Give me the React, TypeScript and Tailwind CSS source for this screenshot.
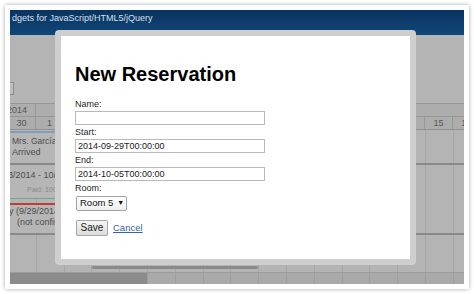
const days = ["30", "1", "2", "3", "4", "5", "6", "7", "8", "9", "10", "11", "12", "13", "14", "15", "16"];

function Field({ label, value }: { label: string; value: string }) {
  return (
    <div>
      <div className="text-[9px] leading-[13px] text-[#262626]">{label}</div>
      <input
        readOnly
        defaultValue={value}
        className="mb-[1px] block h-[14px] w-[190px] border border-[#b9b9b9] bg-white px-[2px] text-[9px] text-[#1a1a1a] outline-none"
      />
    </div>
  );
}

export default function App() {
  return (
    <div className="h-[294px] w-[474px] bg-white p-[5px] font-['Liberation_Sans',Arial,sans-serif]">
      <div className="h-[284px] w-[464px] bg-white p-[5px] shadow-[0_0_4px_rgba(0,0,0,0.35)]">
        <div className="relative flex h-[274px] w-[454px] flex-col overflow-hidden bg-[#b4b4b4]">
          {/* page header */}
          <div className="h-[25px] shrink-0 bg-gradient-to-b from-[#0a3360] to-[#104778] pl-[2px] pt-[2px] text-[9px] leading-[12px] whitespace-nowrap text-[#d6e0eb]">
            dgets for JavaScript/HTML5/jQuery
          </div>

          {/* toolbar area */}
          <div className="h-[68px] shrink-0 pt-[47px]">
            <div className="ml-[-10px] h-[13px] w-[14px] border border-[#8e8e8e] bg-[#bdbdbd]" />
          </div>

          {/* time header */}
          <div className="flex h-[13px] shrink-0 border-t border-[#979797] bg-[#adadad] text-[9px] leading-[12px] text-[#555]">
            <div className="flex w-[26px] shrink-0 justify-end overflow-hidden whitespace-nowrap border-r border-[#979797] pr-[8px]">
              September 2014
            </div>
            <div className="flex-1 pl-[160px] whitespace-nowrap">October 2014</div>
          </div>
          <div className="flex h-[13px] shrink-0 border-t border-[#979797] bg-[#adadad] text-[9px] leading-[12px] text-[#555]">
            <div className="ml-[-1.8px] flex">
              {days.map((d) => (
                <div key={d} className="w-[27.8px] shrink-0 border-r border-[#979797] text-center">
                  {d}
                </div>
              ))}
            </div>
          </div>

          {/* grid body */}
          <div className="flex h-[143px] shrink-0 flex-col border-t border-[#8f8f8f] bg-[repeating-linear-gradient(90deg,transparent_0,transparent_25.8px,#a7a7a7_25.8px,#a7a7a7_26.8px,transparent_26.8px,transparent_27.8px)] text-[9px] leading-[11px] text-[#4d4d4d]">
            <div className="h-[35px] shrink-0 border-b-[2px] border-[#898989]">
              <div className="mt-[1px] h-[32px] w-[70px] border-t-[2px] border-[#7f9ebe] bg-[#b6b6b6] pl-[2px] pt-[3px] whitespace-nowrap">
                <div className="text-[8.5px]">Mrs. García</div>
                <div>Arrived</div>
              </div>
            </div>
            <div className="h-[70px] shrink-0 border-b-[2px] border-[#898989]">
              <div className="h-[34px] w-[70px] border-b border-[#6fa596] bg-[#b6b6b6] pt-[5px] whitespace-nowrap">
                <div className="ml-[-2px]">3/2014 - 10/5/2014</div>
                <div className="mt-[4px] pl-[17px] text-[7px] leading-[9px] text-[#8b8b8b]">Paid: 100%</div>
              </div>
              <div className="mt-[4px] h-[30px] w-[70px] border-t-[2px] border-[#c23b3b] bg-[#b6b6b6] pt-[1px] whitespace-nowrap">
                <div className="ml-[-1px]">y (9/29/2014 - 10/5/2014)</div>
                <div className="pl-[7px]">(not confirmed)</div>
              </div>
            </div>
            <div className="flex flex-1 flex-col justify-end">
              <div className="mb-[3px] ml-[82px] h-[3px] w-[166px] rounded-full bg-[#8a8a8a]" />
            </div>
          </div>

          {/* scrollbar band */}
          <div className="flex h-[12px] shrink-0 border-t border-[#9c9c9c] bg-[#a9a9a9] bg-[repeating-linear-gradient(90deg,transparent_0,transparent_25.8px,#9e9e9e_25.8px,#9e9e9e_26.8px,transparent_26.8px,transparent_27.8px)]">
            <div className="w-[137px] bg-[#8b8b8b]" />
          </div>

          {/* modal */}
          <div className="absolute left-[45px] top-[20px] h-[235px] w-[361px] rounded-[4px] border-[6px] border-[#cfcfcf] bg-white pl-[14px] pt-[27px] text-[#111]">
            <h1 className="text-[20px] font-bold leading-[23px] text-black">New Reservation</h1>
            <div className="mt-[12px]">
              <Field label="Name:" value="" />
              <Field label="Start:" value="2014-09-29T00:00:00" />
              <Field label="End:" value="2014-10-05T00:00:00" />
              <div className="text-[9px] leading-[13px] text-[#262626]">Room:</div>
              <div className="ml-[1px] mt-[1px] flex h-[15px] w-[51px] items-center gap-[4px] rounded-[2px] border border-[#a3a3a3] bg-gradient-to-b from-white to-[#efefef] pl-[3px] text-[9.5px] text-[#111]">
                <span>Room 5</span>
                <span className="text-[7px]">▼</span>
              </div>
              <div className="mt-[9px] flex items-center gap-[5px]">
                <button className="ml-[1px] h-[16px] w-[32px] rounded-[1px] border border-[#a9a9a9] bg-gradient-to-b from-[#f6f6f6] to-[#dcdcdc] text-[10px] leading-[14px] text-[#1a1a1a]">
                  Save
                </button>
                <a href="#" className="text-[9.5px] text-[#3564a8] underline">
                  Cancel
                </a>
              </div>
            </div>
          </div>
        </div>
      </div>
    </div>
  );
}
